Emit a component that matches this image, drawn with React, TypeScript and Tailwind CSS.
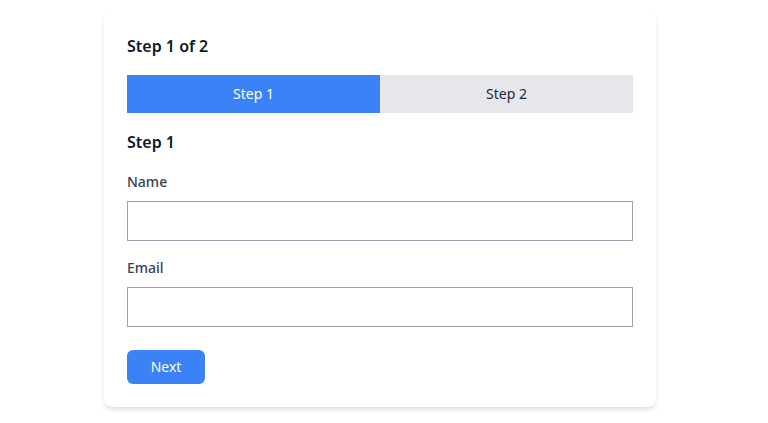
import React from "react";

export default function App() {
  return (
    <div className="min-h-[423px] bg-white pt-[11px] pl-[104px]" style={{ fontFamily: '"Noto Sans", "Open Sans", sans-serif' }}>
      <div className="w-[552px] rounded-lg bg-white p-[23px] shadow-md">
        <h2 className="text-base leading-6 font-semibold text-gray-900 mb-[17px]">Step 1 of 2</h2>
        <div className="flex">
          <div className="flex-1 bg-[#3b82f6] py-2 text-center text-sm leading-[22px] text-white">Step 1</div>
          <div className="flex-1 bg-[#e5e7eb] py-2 text-center text-sm leading-[22px] text-gray-800">Step 2</div>
        </div>
        <h3 className="mt-[17px] text-base leading-6 font-semibold text-gray-900">Step 1</h3>
        <div className="mt-[18px]">
          <label className="block text-sm leading-5 font-medium text-gray-700 mb-[9px]">Name</label>
          <input className="block h-10 w-full border border-gray-400 px-3" />
        </div>
        <div className="mt-[17px]">
          <label className="block text-sm leading-5 font-medium text-gray-700 mb-[9px]">Email</label>
          <input className="block h-10 w-full border border-gray-400 px-3" />
        </div>
        <button className="mt-[23px] block h-[34px] w-[78px] rounded-md bg-[#3b82f6] text-sm text-white">Next</button>
      </div>
    </div>
  );
}
